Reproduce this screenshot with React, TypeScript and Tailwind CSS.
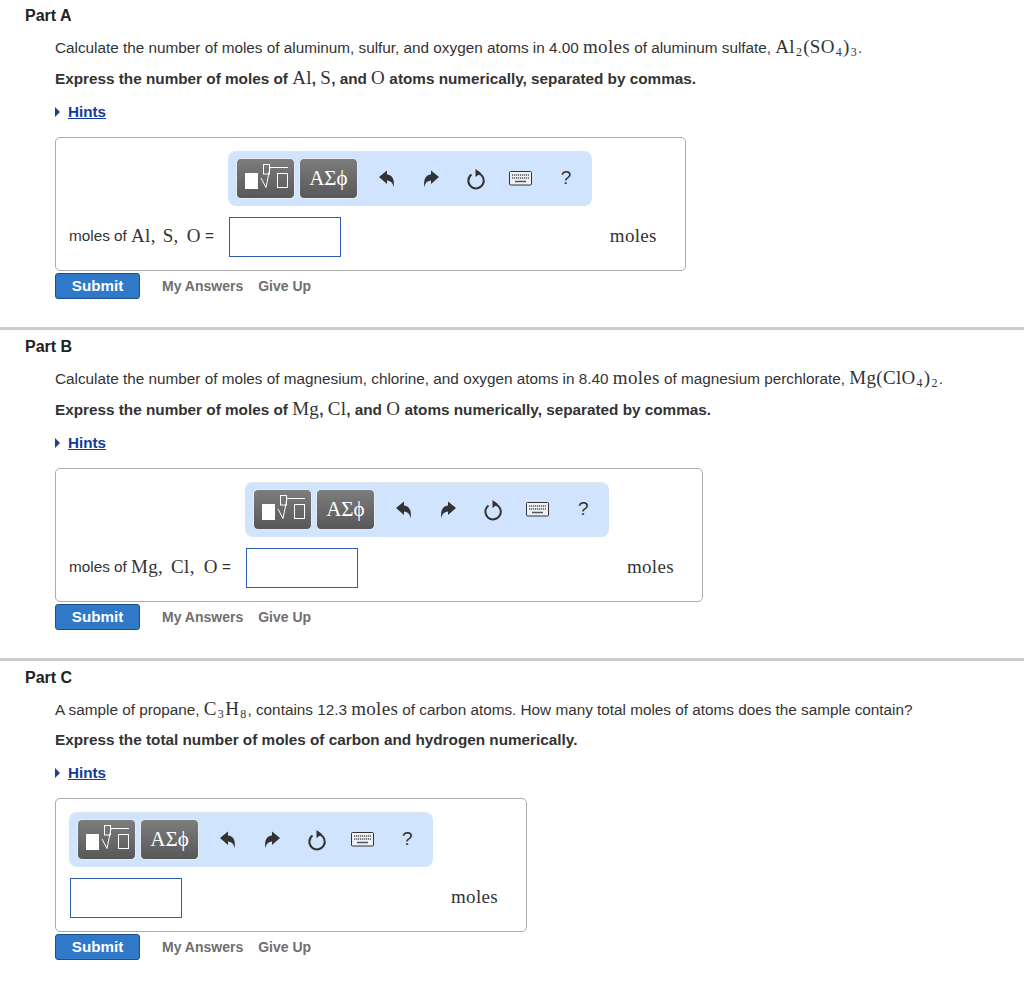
import type { ReactNode } from "react";

const M = ({ children }: { children: ReactNode }) => (
  <span className="font-['Liberation_Serif',serif] text-[19px] tracking-[0.3px] font-normal">{children}</span>
);

const Sub = ({ children }: { children: ReactNode }) => (
  <sub className="text-[12px] font-normal px-[1px]">{children}</sub>
);

const TemplatesIcon = () => (
  <svg width="57" height="39" viewBox="0 0 57 39" fill="none">
    <rect x="8" y="14" width="13" height="16" fill="#fff" />
    <rect x="26.5" y="5.5" width="6" height="9.5" stroke="#fff" strokeWidth="1" />
    <path d="M24 19 L29 28.5 L33 8.5 H51" stroke="#fff" strokeWidth="1" />
    <rect x="40.5" y="14.5" width="10" height="14" stroke="#fff" strokeWidth="1" />
  </svg>
);

const UndoIcon = () => (
  <svg width="16" height="18" viewBox="0 0 16 18" fill="#333">
    <path d="M0 7 L8 0.5 V4.5 C13 5 16 9 14.5 17.5 C14 13 12 11 8 10.5 V14 Z" />
  </svg>
);

const RedoIcon = () => (
  <svg width="16" height="18" viewBox="0 0 16 18" fill="#333">
    <path d="M16 7 L8 0.5 V4.5 C3 5 0 9 1.5 17.5 C2 13 4 11 8 10.5 V14 Z" />
  </svg>
);

const ResetIcon = () => (
  <svg width="20" height="22" viewBox="0 0 20 22" fill="none">
    <path d="M5.5 6.5 A7.7 7.7 0 1 0 12.5 5.4" stroke="#333" strokeWidth="2" />
    <path d="M9.5 1 L15 5 L9.5 9 Z" fill="#333" />
  </svg>
);

const KeyboardIcon = () => (
  <svg width="23" height="15" viewBox="0 0 23 15" fill="none">
    <rect x="0.5" y="0.5" width="22" height="13.5" rx="1" fill="#eef1f5" stroke="#333" />
    <path d="M3 4 H20" stroke="#555" strokeWidth="1.5" strokeDasharray="1.2 0.8" />
    <path d="M3 7 H20" stroke="#555" strokeWidth="1.5" strokeDasharray="1.2 0.8" />
    <path d="M6 10.5 H17" stroke="#555" strokeWidth="1.5" />
  </svg>
);

const Toolbar = () => (
  <div className="w-[364px] h-[55px] rounded-[8px] bg-[#d0e4fd] border-t border-[#dfe5ec] flex items-center pl-[8px] pb-[1px]">
    <button className="w-[59px] h-[41px] rounded-[5px] border border-[#e6ecf4] bg-gradient-to-b from-[#7d7d7d] to-[#585858] flex items-center justify-center">
      <TemplatesIcon />
    </button>
    <button className="ml-[4px] w-[59px] h-[41px] rounded-[5px] border border-[#e6ecf4] bg-gradient-to-b from-[#7d7d7d] to-[#585858] text-white font-['Liberation_Serif',serif] text-[21px]">
      ΑΣϕ
    </button>
    <div className="ml-[20px] w-[18px] flex justify-center"><UndoIcon /></div>
    <div className="ml-[26px] w-[18px] flex justify-center"><RedoIcon /></div>
    <div className="ml-[26px] w-[20px] flex justify-center"><ResetIcon /></div>
    <div className="ml-[23px] w-[24px] flex justify-center"><KeyboardIcon /></div>
    <div className="ml-[28px] text-[19px] text-[#333]">?</div>
  </div>
);

type PartProps = {
  name: string;
  question: ReactNode;
  express: ReactNode;
  label?: ReactNode;
  divider?: boolean;
  hintsGap?: string;
};

const Part = ({ name, question, express, label, divider, hintsGap = "mt-[14px]" }: PartProps) => (
  <section className={divider ? "border-t-[3px] border-[#cccccc] h-[331px] pt-[7px]" : "h-[327px] pt-[6px]"}>
    <h3 className="ml-[25px] h-[20px] leading-[20px] text-[16px] font-bold text-[#222]">{name}</h3>
    <div className="ml-[55px] mt-[11px] h-[20px] leading-[20px] text-[15.3px] text-[#333] whitespace-nowrap">{question}</div>
    <div className="ml-[55px] mt-[11px] h-[20px] leading-[20px] text-[15.3px] font-bold text-[#333] whitespace-nowrap">{express}</div>
    <div className={`ml-[55px] ${hintsGap} h-[20px] flex items-center gap-[8px]`}>
      <span className="w-0 h-0 border-y-[5px] border-y-transparent border-l-[5px] border-l-[#1c3f8f]" />
      <a href="#" className="text-[15.2px] font-bold text-[#123c9c] underline">Hints</a>
    </div>
    <div className={`ml-[55px] mt-[15px] w-fit h-[134px] rounded-[5px] border border-[#aaaaaa] pl-[13px] pr-[28px] pt-[13px] grid gap-y-[11px] grid-rows-[55px_auto] ${label ? "grid-cols-[auto_364px_auto]" : "grid-cols-[364px_auto]"}`}>
      {label ? <div /> : null}
      <div className={label ? "ml-[-1px]" : ""}><Toolbar /></div>
      <div />
      {label ? (
        <div className="pr-[15px] h-[39px] flex items-center text-[15.3px] text-[#333] whitespace-nowrap">{label}</div>
      ) : null}
      <div className={label ? "" : "pl-[1px]"}>
        <input className="block w-[112px] h-[40px] bg-white border border-[#2f5fb3] outline-none" />
      </div>
      <div className={`h-[39px] flex items-center font-['Liberation_Serif',serif] text-[19px] tracking-[0.3px] text-[#333] ${label ? "pl-[17px]" : "pl-[18px]"}`}>
        moles
      </div>
    </div>
    <div className="ml-[55px] mt-[2px] flex items-center">
      <button className="w-[85px] h-[26px] rounded-[3px] bg-[#2f79c8] border border-[#1c4f8c] text-white text-[15.2px] font-bold">Submit</button>
      <a className="ml-[22px] text-[14px] font-bold text-[#6f6f6f]">My Answers</a>
      <a className="ml-[15px] text-[14px] font-bold text-[#6f6f6f]">Give Up</a>
    </div>
  </section>
);

export default function App() {
  return (
    <div className="w-[1024px] h-[983px] bg-white overflow-hidden font-['Liberation_Sans',Arial,sans-serif]">
      <Part
        name="Part A"
        question={<>Calculate the number of moles of aluminum, sulfur, and oxygen atoms in 4.00 <M>moles</M> of aluminum sulfate, <M>Al<Sub>2</Sub>(SO<Sub>4</Sub>)<Sub>3</Sub></M>.</>}
        express={<>Express the number of moles of <M>Al</M>, <M>S</M>, and <M>O</M> atoms numerically, separated by commas.</>}
        label={<>moles of&nbsp;<M>Al,<span className="inline-block w-[7px]" />S,<span className="inline-block w-[8px]" />O</M>&nbsp;=</>}
      />
      <Part
        divider
        name="Part B"
        question={<>Calculate the number of moles of magnesium, chlorine, and oxygen atoms in 8.40 <M>moles</M> of magnesium perchlorate, <M>Mg(ClO<Sub>4</Sub>)<Sub>2</Sub></M>.</>}
        express={<>Express the number of moles of <M>Mg</M>, <M>Cl</M>, and <M>O</M> atoms numerically, separated by commas.</>}
        label={<>moles of&nbsp;<M>Mg,<span className="inline-block w-[8px]" />Cl,<span className="inline-block w-[9px]" />O</M>&nbsp;=</>}
      />
      <Part
        divider
        name="Part C"
        hintsGap="mt-[13px]"
        question={<>A sample of propane, <M>C<Sub>3</Sub>H<Sub>8</Sub></M>, contains 12.3 <M>moles</M> of carbon atoms. How many total moles of atoms does the sample contain?</>}
        express={<>Express the total number of moles of carbon and hydrogen numerically.</>}
      />
    </div>
  );
}
